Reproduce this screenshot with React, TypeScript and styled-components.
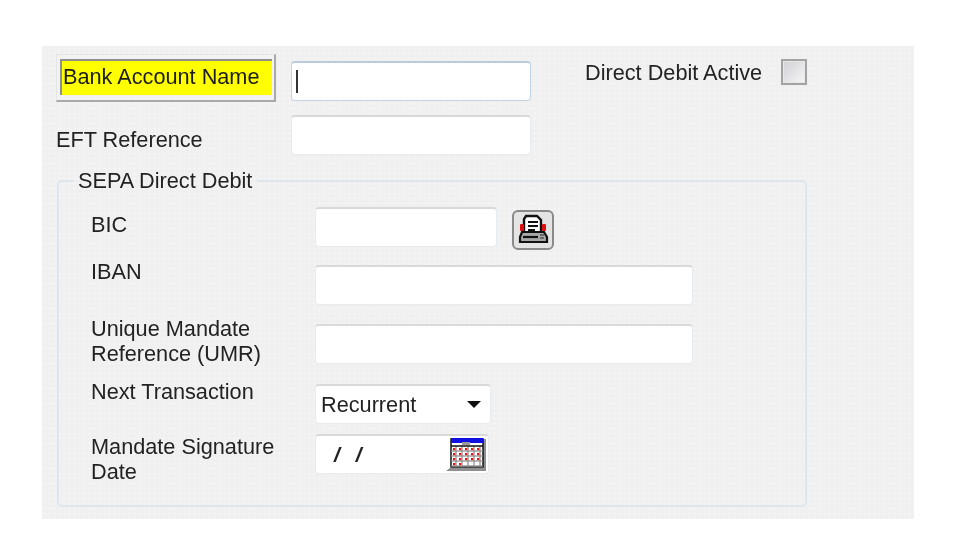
import React from 'react';
import styled, { createGlobalStyle } from 'styled-components';

const GlobalStyle = createGlobalStyle`
  html, body { margin: 0; padding: 0; background: #ffffff; }
  body { font-family: "Liberation Sans", Arial, sans-serif; color: #222222; }
`;

const Page = styled.div`
  width: 960px;
  height: 560px;
  padding: 46px 0 0 42px;
  box-sizing: border-box;
  overflow: hidden;
`;

const Panel = styled.div`
  width: 872px;
  height: 473px;
  box-sizing: border-box;
  padding: 8px 0 0 14px;
  background-color: #f0f0f0;
  background-image: radial-gradient(circle, #f4f4f4 1px, transparent 1.4px);
  background-size: 5px 5px;
  font-size: 21.7px;
  line-height: 25px;
  filter: blur(0.35px);
`;

const TopRow = styled.div`
  display: flex;
  align-items: flex-start;
  height: 61px;
`;

const SecondRow = styled.div`
  display: flex;
  align-items: flex-start;
  height: 53px;
`;

const HighlightLabel = styled.div`
  width: 220px;
  height: 48px;
  box-sizing: border-box;
  padding: 4px 2px 5px 3px;
  background: #f2f2f2;
  border-top: 1px solid #e4e4e4;
  border-left: 1px solid #e4e4e4;
  border-right: 2px solid #a9a9a9;
  border-bottom: 2px solid #a9a9a9;
`;

const HighlightInner = styled.div`
  height: 100%;
  box-sizing: border-box;
  padding: 3px 0 0 1px;
  background: #ffff00;
  border-top: 2px solid #8f8f8f;
  border-left: 2px solid #8f8f8f;
  color: #1c1c1c;
  white-space: nowrap;
`;

const FieldBox = styled.div<{ $width: number; $focused?: boolean }>`
  width: ${p => p.$width}px;
  height: 40px;
  flex: none;
  box-sizing: border-box;
  display: flex;
  align-items: center;
  background: #ffffff;
  border-radius: 4px;
  border: 1px solid ${p => (p.$focused ? '#c4d4e6' : '#e6ebf0')};
  border-top: 2px solid ${p => (p.$focused ? '#bccbdc' : '#d9d9d9')};
`;

const Caret = styled.span`
  width: 2px;
  height: 23px;
  margin-left: 4px;
  background: #333333;
`;

const Label = styled.div`
  width: 235px;
  flex: none;
  white-space: nowrap;
`;

const EftLabel = styled(Label)`
  padding-top: 12px;
`;

const TopField = styled.div`
  margin: 7px 0 0 15px;
`;

const ActiveWrap = styled.div`
  display: flex;
  align-items: flex-start;
  margin: 5px 0 0 54px;
`;

const ActiveText = styled.div`
  padding-top: 1px;
  white-space: nowrap;
`;

const Check = styled.div`
  width: 26px;
  height: 26px;
  margin-left: 19px;
  box-sizing: border-box;
  border: 2px solid #a3a3a3;
  background: linear-gradient(135deg, #d0d0d6, #f6f6f6);
  box-shadow: inset 0 0 0 1px #e8e8e8;
`;

const Group = styled.fieldset`
  width: 750px;
  height: 339px;
  margin: 0 0 0 1px;
  padding: 13px 0 0 32px;
  box-sizing: border-box;
  border: 2px solid #dde5ee;
  border-radius: 5px;
`;

const GroupTitle = styled.legend`
  margin-left: -17px;
  padding: 0 5px 0 4px;
  font-size: 21.7px;
  line-height: 26px;
`;

const GroupRow = styled.div<{ $height: number }>`
  display: flex;
  align-items: flex-start;
  height: ${p => p.$height}px;
`;

const GroupLabel = styled.div<{ $top: number }>`
  width: 224px;
  flex: none;
  white-space: nowrap;
  margin-top: ${p => p.$top}px;
`;

const IconButton = styled.button`
  width: 42px;
  height: 40px;
  margin: 3px 0 0 15px;
  padding: 0;
  display: flex;
  align-items: center;
  justify-content: center;
  background: #e4e4e4;
  border: 2px solid #8a8a8a;
  border-radius: 6px;
`;

const SelectValue = styled.span`
  flex: 1;
  padding-left: 5px;
`;

const Arrow = styled.span`
  width: 0;
  height: 0;
  margin-right: 9px;
  border-left: 7px solid transparent;
  border-right: 7px solid transparent;
  border-top: 7px solid #111111;
`;

const DateValue = styled.span`
  flex: 1;
  padding-left: 18px;
  font-style: italic;
  font-weight: bold;
  word-spacing: 10px;
  font-size: 21px;
`;

const PrinterIcon = () => (
  <svg width="32" height="32" viewBox="0 0 32 32">
    <path d="M9 2h11l4 4v14H7V5z" fill="#fff" stroke="#111" strokeWidth="2.4" />
    <path d="M11 8h10M11 12h10M11 16h7" stroke="#111" strokeWidth="2.2" />
    <rect x="3" y="10" width="4" height="7" rx="1" fill="#e01010" />
    <rect x="25" y="10" width="4" height="7" rx="1" fill="#e01010" />
    <path d="M5 18h22l3 5v5H3v-5z" fill="#a8a8a8" stroke="#111" strokeWidth="2.2" />
    <path d="M6 23h15" stroke="#111" strokeWidth="2.2" />
    <path d="M23 21h4M23 24h4" stroke="#555" strokeWidth="1.6" />
  </svg>
);

const CalendarIcon = () => {
  const xs = [7, 13, 19, 25, 31];
  const ys = [11, 16, 21, 26];
  return (
    <svg width="42" height="36" viewBox="0 0 42 36" style={{ flex: 'none' }}>
      <path d="M37 2h3v32H0l4-3h33z" fill="#8f8f8f" />
      <rect x="5" y="2" width="32" height="28" fill="#ffffff" stroke="#111111" strokeWidth="1.5" />
      <rect x="5" y="1" width="32" height="5" fill="#1010e0" />
      <rect x="16" y="5" width="8" height="3" fill="#9a9a9a" />
      {xs.map(x => (
        <path key={x} d={`M${x + 3} 9v21`} stroke="#8a8a8a" strokeWidth="1.2" />
      ))}
      {ys.map(y => (
        <path key={y} d={`M5 ${y + 3}h32`} stroke="#8a8a8a" strokeWidth="1.2" />
      ))}
      <path d="M5 9h32" stroke="#111111" strokeWidth="1.5" />
      {ys.map((y, r) =>
        xs
          .filter((_, c) => !(r === 3 && c > 1))
          .map(x => <rect key={`${x}-${y}`} x={x} y={y} width="2.2" height="2.2" fill="#ee1111" />)
      )}
    </svg>
  );
};

export default function App() {
  return (
    <>
      <GlobalStyle />
      <Page>
        <Panel>
          <TopRow>
            <HighlightLabel>
              <HighlightInner>Bank Account Name</HighlightInner>
            </HighlightLabel>
            <TopField>
              <FieldBox $width={240} $focused>
                <Caret />
              </FieldBox>
            </TopField>
            <ActiveWrap>
              <ActiveText>Direct Debit Active</ActiveText>
              <Check />
            </ActiveWrap>
          </TopRow>
          <SecondRow>
            <EftLabel>EFT Reference</EftLabel>
            <FieldBox $width={240} />
          </SecondRow>
          <Group>
            <GroupTitle>SEPA Direct Debit</GroupTitle>
            <GroupRow $height={58}>
              <GroupLabel $top={5}>BIC</GroupLabel>
              <FieldBox $width={182} />
              <IconButton aria-label="Lookup">
                <PrinterIcon />
              </IconButton>
            </GroupRow>
            <GroupRow $height={59}>
              <GroupLabel $top={-6}>IBAN</GroupLabel>
              <FieldBox $width={378} />
            </GroupRow>
            <GroupRow $height={60}>
              <GroupLabel $top={-8}>
                Unique Mandate
                <br />
                Reference (UMR)
              </GroupLabel>
              <FieldBox $width={378} />
            </GroupRow>
            <GroupRow $height={50}>
              <GroupLabel $top={-5}>Next Transaction</GroupLabel>
              <FieldBox $width={176}>
                <SelectValue>Recurrent</SelectValue>
                <Arrow />
              </FieldBox>
            </GroupRow>
            <GroupRow $height={60}>
              <GroupLabel $top={0}>
                Mandate Signature
                <br />
                Date
              </GroupLabel>
              <FieldBox $width={174}>
                <DateValue>/ /</DateValue>
                <CalendarIcon />
              </FieldBox>
            </GroupRow>
          </Group>
        </Panel>
      </Page>
    </>
  );
}
